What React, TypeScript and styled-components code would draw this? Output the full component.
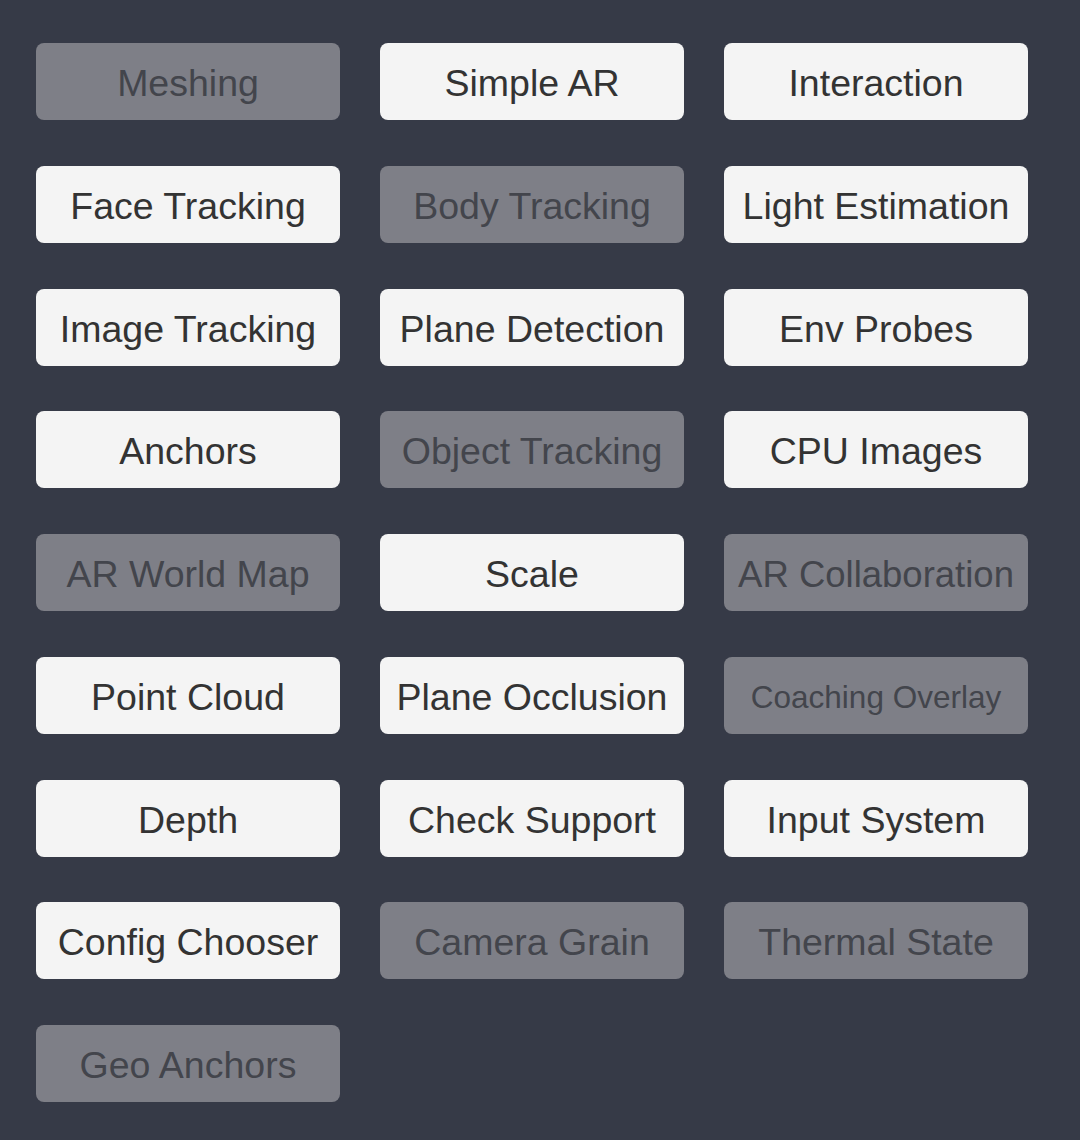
import * as React from "react";
import styled, { createGlobalStyle } from "styled-components";

const GlobalStyle = createGlobalStyle`
  html, body {
    margin: 0;
    padding: 0;
    background: #363a47;
  }
  body {
    font-family: "Liberation Sans", Arial, sans-serif;
  }
`;

const Screen = styled.div`
  width: 1080px;
  height: 1140px;
  background: #363a47;
  box-sizing: border-box;
  padding: 43px 0 0 36px;
`;

const Grid = styled.div`
  display: grid;
  grid-template-columns: repeat(3, 304px);
  grid-auto-rows: 77px;
  column-gap: 40px;
  row-gap: 45.75px;
`;

const SceneButton = styled.div<{ $enabled: boolean; $size: number }>`
  display: flex;
  align-items: center;
  justify-content: center;
  box-sizing: border-box;
  padding-top: 4px;
  border-radius: 8px;
  background: ${(p) => (p.$enabled ? "#f4f4f4" : "#7e7f87")};
  color: ${(p) => (p.$enabled ? "#333333" : "#43454c")};
  font-size: ${(p) => p.$size}px;
  white-space: nowrap;
  overflow: hidden;
  cursor: pointer;
`;

type Scene = { name: string; enabled: boolean; size?: number };

const scenes: Scene[] = [
  { name: "Meshing", enabled: false },
  { name: "Simple AR", enabled: true },
  { name: "Interaction", enabled: true },
  { name: "Face Tracking", enabled: true },
  { name: "Body Tracking", enabled: false },
  { name: "Light Estimation", enabled: true },
  { name: "Image Tracking", enabled: true },
  { name: "Plane Detection", enabled: true },
  { name: "Env Probes", enabled: true },
  { name: "Anchors", enabled: true },
  { name: "Object Tracking", enabled: false },
  { name: "CPU Images", enabled: true },
  { name: "AR World Map", enabled: false },
  { name: "Scale", enabled: true },
  { name: "AR Collaboration", enabled: false, size: 36.5 },
  { name: "Point Cloud", enabled: true },
  { name: "Plane Occlusion", enabled: true },
  { name: "Coaching Overlay", enabled: false, size: 31.5 },
  { name: "Depth", enabled: true },
  { name: "Check Support", enabled: true },
  { name: "Input System", enabled: true },
  { name: "Config Chooser", enabled: true },
  { name: "Camera Grain", enabled: false },
  { name: "Thermal State", enabled: false },
  { name: "Geo Anchors", enabled: false },
];

export default function App() {
  return (
    <>
      <GlobalStyle />
      <Screen>
        <Grid>
          {scenes.map((s) => (
            <SceneButton key={s.name} $enabled={s.enabled} $size={s.size ?? 37.5}>
              {s.name}
            </SceneButton>
          ))}
        </Grid>
      </Screen>
    </>
  );
}
